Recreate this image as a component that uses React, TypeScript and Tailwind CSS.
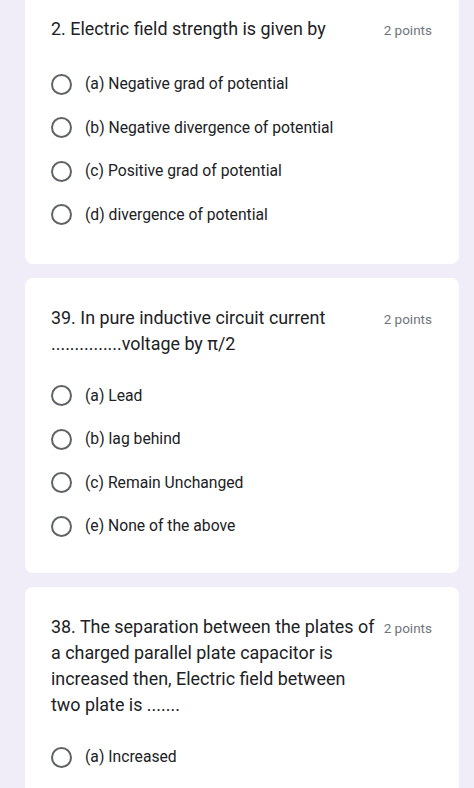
import React from "react";

type Q = { lines: string[]; options: string[]; first?: boolean };

function Radio() {
  return <span className="block w-[21px] h-[21px] rounded-full border-2 border-[#5f6368] shrink-0" />;
}

function Card({ lines, options, first }: Q) {
  return (
    <div
      className={`bg-white rounded-lg ml-[25px] mr-[15px] pl-[26px] pr-[27px] ${
        first ? "-mt-[10px] pt-[26px] pb-[37px]" : "pt-[27px] pb-[35px]"
      }`}
    >
      <div className="flex items-start gap-2">
        <div
          className="flex-1 text-[17.9px] leading-[26px] text-[#202124]"
          style={{ fontFamily: "Roboto, sans-serif" }}
        >
          {lines.map((l) => (
            <div key={l} className="whitespace-nowrap">
              {l}
            </div>
          ))}
        </div>
        <div
          className="shrink-0 text-[13.5px] leading-[26px] text-[#70757a] pt-[1px]"
          style={{ fontFamily: "Roboto, sans-serif" }}
        >
          2 points
        </div>
      </div>
      <div className={`${first ? "mt-[29px]" : "mt-[27px]"} flex flex-col gap-[19.5px]`}>
        {options.map((o) => (
          <div key={o} className="flex items-center h-6">
            <Radio />
            <span
              className="ml-[13px] text-[15.7px] text-[#202124]"
              style={{ fontFamily: "Roboto, sans-serif" }}
            >
              {o}
            </span>
          </div>
        ))}
      </div>
    </div>
  );
}

export default function App() {
  return (
    <div className="w-[474px] h-[788px] overflow-hidden bg-[#f0ecf8] flex flex-col gap-[14px]">
      <Card
        first
        lines={["2. Electric field strength is given by"]}
        options={[
          "(a) Negative grad of potential",
          "(b) Negative divergence of potential",
          "(c) Positive grad of potential",
          "(d) divergence of potential",
        ]}
      />
      <Card
        lines={["39. In pure inductive circuit current", "...............voltage by π/2"]}
        options={["(a) Lead", "(b) lag behind", "(c) Remain Unchanged", "(e) None of the above"]}
      />
      <Card
        lines={[
          "38. The separation between the plates of",
          "a charged parallel plate capacitor is",
          "increased then, Electric field between",
          "two plate is .......",
        ]}
        options={["(a) Increased"]}
      />
    </div>
  );
}
